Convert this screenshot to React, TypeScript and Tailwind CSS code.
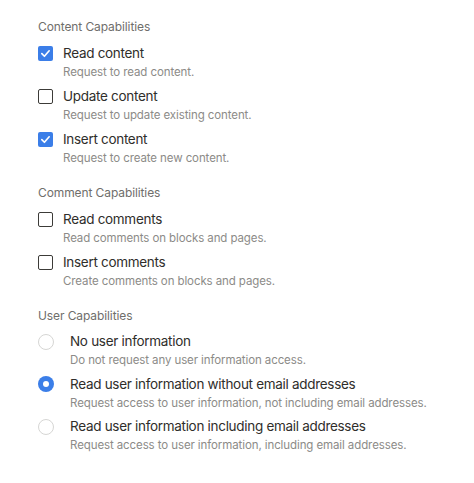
import React from 'react';

type Opt = { label: string; desc: string; on: boolean };

const content: Opt[] = [
  { label: 'Read content', desc: 'Request to read content.', on: true },
  { label: 'Update content', desc: 'Request to update existing content.', on: false },
  { label: 'Insert content', desc: 'Request to create new content.', on: true },
];

const comments: Opt[] = [
  { label: 'Read comments', desc: 'Read comments on blocks and pages.', on: false },
  { label: 'Insert comments', desc: 'Create comments on blocks and pages.', on: false },
];

const users: Opt[] = [
  { label: 'No user information', desc: 'Do not request any user information access.', on: false },
  { label: 'Read user information without email addresses', desc: 'Request access to user information, not including email addresses.', on: true },
  { label: 'Read user information including email addresses', desc: 'Request access to user information, including email addresses.', on: false },
];

function Checkbox({ on }: { on: boolean }) {
  if (on) {
    return (
      <span className="w-[15px] h-[15px] rounded-[2px] bg-[#3b7ee8] flex items-center justify-center">
        <svg width="11" height="11" viewBox="0 0 12 12" fill="none">
          <path d="M2 6.2 L4.8 9 L10 3" stroke="white" strokeWidth="1.8" strokeLinecap="round" strokeLinejoin="round" />
        </svg>
      </span>
    );
  }
  return <span className="block w-[15px] h-[15px] rounded-[2px] border-[1.5px] border-[#3c3b38]" />;
}

function Radio({ on }: { on: boolean }) {
  if (on) {
    return (
      <span className="w-[16px] h-[16px] rounded-full bg-[#3b7ee8] flex items-center justify-center">
        <span className="block w-[6px] h-[6px] rounded-full bg-white" />
      </span>
    );
  }
  return <span className="block w-[16px] h-[16px] rounded-full border border-[#d6d6d4] bg-white" />;
}

function Section({ title, items, radio }: { title: string; items: Opt[]; radio?: boolean }) {
  return (
    <section>
      <h3 className="text-[12px] leading-[16px] tracking-[-0.1px] text-[#6f6e6b]">{title}</h3>
      <div className={radio ? 'mt-[8px] flex flex-col gap-[5.5px]' : 'mt-[9px] flex flex-col gap-[6px]'}>
        {items.map(o => (
          <div key={o.label} className="flex">
            <div className={radio ? 'w-[32px] pt-[1.5px] shrink-0' : 'w-[25px] pt-[2px] shrink-0'}>
              {radio ? <Radio on={o.on} /> : <Checkbox on={o.on} />}
            </div>
            <div>
              <div className="text-[13.5px] leading-[19px] tracking-[-0.3px] text-[#2f2e2b]">{o.label}</div>
              <div className="mt-[1px] text-[11.5px] leading-[17px] tracking-[-0.1px] text-[#8c8b88]">{o.desc}</div>
            </div>
          </div>
        ))}
      </div>
    </section>
  );
}

export default function App() {
  return (
    <div className="w-[474px] h-[483px] bg-white pl-[38px] pt-[19px] flex flex-col gap-[18px] font-['Inter',sans-serif]">
      <Section title="Content Capabilities" items={content} />
      <Section title="Comment Capabilities" items={comments} />
      <Section title="User Capabilities" items={users} radio />
    </div>
  );
}
